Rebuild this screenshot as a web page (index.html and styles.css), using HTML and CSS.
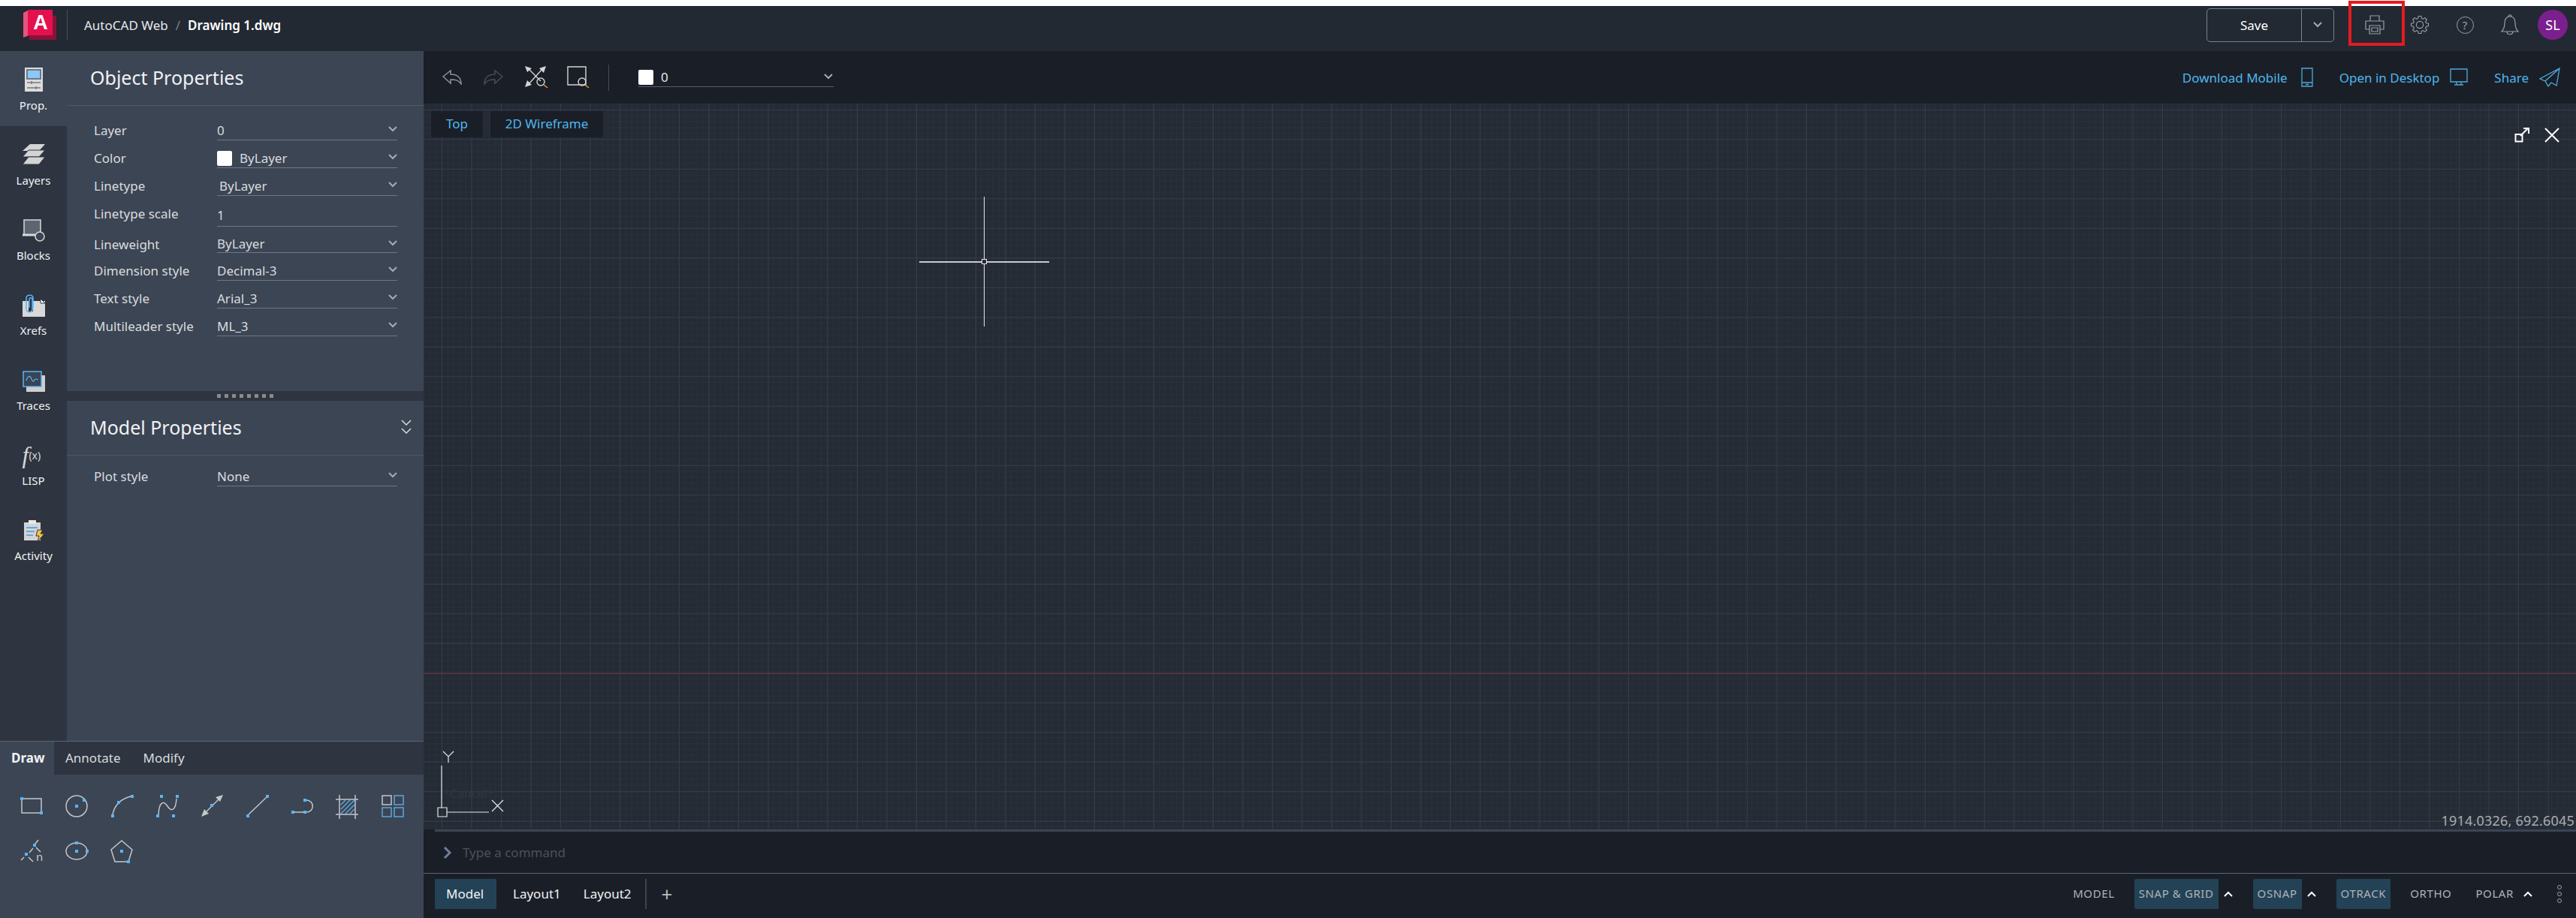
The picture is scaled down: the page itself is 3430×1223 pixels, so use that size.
FILE: index.html
```html
<!DOCTYPE html>
<html lang="en">
<head>
    <meta charset="UTF-8">
    <meta name="viewport" content="width=device-width, initial-scale=1.0">
    <title>AutoCAD Web - Drawing 1.dwg</title>
    <link rel="stylesheet" href="styles.css">
</head>
<body>
    <header class="topbar">
        <svg class="logo" viewBox="0 0 44 40">
            <path fill="#8a1238" d="M8 8h36v32H8z"/>
            <path fill="#e8537d" d="M0 4l8-4v34l-8 3z"/>
            <path fill="#e5114f" d="M6 0h33v34H6z"/>
            <text x="23" y="26" class="logo-a">A</text>
        </svg>
        <span class="top-sep"></span>
        <span class="crumb">AutoCAD Web</span>
        <span class="crumb-slash">/</span>
        <span class="crumb crumb-file">Drawing 1.dwg</span>
        <div class="top-right">
            <div class="save-btn">
                <span class="save-label">Save</span>
                <span class="save-drop">
                    <svg class="chev" viewBox="0 0 12 8"><path d="M1 1l5 5 5-5"/></svg>
                </span>
            </div>
            <span class="top-icon">
                <svg class="line-icon" width="26" height="26" viewBox="0 0 26 26">
                    <path d="M7 8V1h12v7M6 19H1V8h24v11h-5"/>
                    <path d="M6 14h14v11H6zM9 17h8v5H9z"/>
                </svg>
            </span>
            <span class="top-icon">
                <svg class="line-icon" width="26" height="26" viewBox="-14 -14 28 28">
                    <polygon points="9.18,-2.46 12.35,-1.96 12.35,1.96 9.18,2.46 8.23,4.75 10.11,7.35 7.35,10.11 4.75,8.23 2.46,9.18 1.96,12.35 -1.96,12.35 -2.46,9.18 -4.75,8.23 -7.35,10.11 -10.11,7.35 -8.23,4.75 -9.18,2.46 -12.35,1.96 -12.35,-1.96 -9.18,-2.46 -8.23,-4.75 -10.11,-7.35 -7.35,-10.11 -4.75,-8.23 -2.46,-9.18 -1.96,-12.35 1.96,-12.35 2.46,-9.18 4.75,-8.23 7.35,-10.11 10.11,-7.35 8.23,-4.75"/>
                    <circle r="5"/>
                </svg>
            </span>
            <span class="top-icon">
                <span class="help-icon">?</span>
            </span>
            <span class="top-icon">
                <svg class="line-icon" width="24" height="30" viewBox="0 0 24 30">
                    <path d="M12 4c-5 0-7 4-7 9 0 5-1 8-4 11h22c-3-3-4-6-4-11 0-5-2-9-7-9zM10 4c0-3 4-3 4 0M8 24c0 5 8 5 8 0"/>
                </svg>
            </span>
            <span class="avatar">SL</span>
        </div>
    </header>
    <div class="print-mark"></div>

    <div class="workspace">
        <aside class="sidebar">
            <div class="side-top">
                <nav class="rail">
                    <div class="rail-item active">
                        <svg width="24" height="32" viewBox="0 0 24 32">
                            <path fill="#dcdcdc" d="M0 0h24v32H0z"/>
                            <path fill="#8cc8f5" stroke="#6a7a8a" stroke-width="2" d="M3 3h18v12H3z"/>
                            <path stroke="#777" stroke-width="1.5" d="M3 20h18M3 27h18M9 18v4M15 25v4"/>
                        </svg>
                        <span>Prop.</span>
                    </div>
                    <div class="rail-item">
                        <svg width="30" height="30" viewBox="0 0 30 30" fill="#d4d4d4">
                            <path d="M10 0h20l-8 9H0z"/><path d="M8 8h22l-8 9H0z" stroke="#2e3440"/><path d="M8 17h22l-8 10H0z" stroke="#2e3440"/>
                        </svg>
                        <span>Layers</span>
                    </div>
                    <div class="rail-item">
                        <svg width="30" height="30" viewBox="0 0 30 30">
                            <path fill="#5c6570" stroke="#d8d8d8" stroke-width="1.5" d="M2 1h22v20H2z"/>
                            <path stroke="#d8d8d8" stroke-width="3" d="M0 21h17"/>
                            <circle cx="23" cy="23" r="6" fill="#3c4554" stroke="#d8d8d8" stroke-width="1.5"/>
                        </svg>
                        <span>Blocks</span>
                    </div>
                    <div class="rail-item">
                        <svg width="30" height="30" viewBox="0 0 30 30">
                            <path fill="#d8d8d8" d="M0 9h8v14h6V9h8l8 0 0 2v19H0z"/>
                            <path fill="#fff" stroke="#2e3440" d="M24 6l6 6h-6z"/>
                            <path fill="none" stroke="#5ab4f5" stroke-width="1.5" d="M14 20V5c0-5-9-5-9 0v14c0 6 8 6 8 1V7c0-3-4-3-4 0v11"/>
                        </svg>
                        <span>Xrefs</span>
                    </div>
                    <div class="rail-item">
                        <svg width="30" height="28" viewBox="0 0 30 28">
                            <path fill="#cfcfcf" d="M5 6h25v22H5z"/>
                            <path fill="#3a4452" stroke="#5ab4f5" stroke-width="1.5" d="M1 1h24v20H1z"/>
                            <path fill="none" stroke="#5ab4f5" stroke-width="1.2" d="M5 13c2-7 5-7 7-2s3 3 4 1 3-1 5 0"/>
                        </svg>
                        <span>Traces</span>
                    </div>
                    <div class="rail-item">
                        <div class="fx-icon"><i>f</i><small>(x)</small></div>
                        <span>LISP</span>
                    </div>
                    <div class="rail-item">
                        <svg width="30" height="30" viewBox="0 0 30 30">
                            <path fill="#d4d4d4" d="M2 4h22v24H2z"/>
                            <path fill="#e8e8e8" d="M8 1h10v5H8z"/>
                            <path stroke="#3d9be8" stroke-width="1.4" d="M5 11h15M5 16h11M5 21h9"/>
                            <path fill="#f5c242" stroke="#2e3440" d="M20 14h7l-3 5h5l-9 11 2-8h-4z"/>
                        </svg>
                        <span>Activity</span>
                    </div>
                </nav>
                <div class="panels">
                    <section class="panel-object">
                        <h2 class="panel-title">Object Properties</h2>
                        <div class="prop-list">
                            <div class="prop-row"><label>Layer</label><div class="prop-value">0<svg class="chev" viewBox="0 0 12 8"><path d="M1 1l5 5 5-5"/></svg></div></div>
                            <div class="prop-row"><label>Color</label><div class="prop-value"><span class="swatch"></span>ByLayer<svg class="chev" viewBox="0 0 12 8"><path d="M1 1l5 5 5-5"/></svg></div></div>
                            <div class="prop-row"><label>Linetype</label><div class="prop-value indent">ByLayer<svg class="chev" viewBox="0 0 12 8"><path d="M1 1l5 5 5-5"/></svg></div></div>
                            <div class="prop-row tall"><label>Linetype scale</label><div class="prop-value">1</div></div>
                            <div class="prop-row short"><label>Lineweight</label><div class="prop-value">ByLayer<svg class="chev" viewBox="0 0 12 8"><path d="M1 1l5 5 5-5"/></svg></div></div>
                            <div class="prop-row"><label>Dimension style</label><div class="prop-value">Decimal-3<svg class="chev" viewBox="0 0 12 8"><path d="M1 1l5 5 5-5"/></svg></div></div>
                            <div class="prop-row"><label>Text style</label><div class="prop-value">Arial_3<svg class="chev" viewBox="0 0 12 8"><path d="M1 1l5 5 5-5"/></svg></div></div>
                            <div class="prop-row"><label>Multileader style</label><div class="prop-value">ML_3<svg class="chev" viewBox="0 0 12 8"><path d="M1 1l5 5 5-5"/></svg></div></div>
                        </div>
                    </section>
                    <div class="splitter">
                        <i></i><i></i><i></i><i></i><i></i><i></i><i></i><i></i>
                    </div>
                    <section class="panel-model">
                        <h2 class="panel-title">Model Properties
                            <svg class="double-chev" viewBox="0 0 14 20"><path d="M1 1l6 6 6-6M1 12l6 6 6-6"/></svg>
                        </h2>
                        <div class="prop-list">
                            <div class="prop-row"><label>Plot style</label><div class="prop-value">None<svg class="chev" viewBox="0 0 12 8"><path d="M1 1l5 5 5-5"/></svg></div></div>
                        </div>
                    </section>
                </div>
            </div>
            <div class="palette">
                <div class="palette-tabs">
                    <span class="palette-tab active">Draw</span>
                    <span class="palette-tab">Annotate</span>
                    <span class="palette-tab">Modify</span>
                </div>
                <div class="tool-grid">
                    <svg class="tool" viewBox="0 0 32 32"><path d="M3 6h26v19H3z"/><rect class="h" x="1" y="4" width="4" height="4"/><rect class="h" x="27" y="23" width="4" height="4"/></svg>
                    <svg class="tool" viewBox="0 0 32 32"><circle cx="16" cy="16" r="14"/><rect class="h" x="14" y="14" width="4" height="4"/><rect class="h" x="24" y="6" width="4" height="4"/></svg>
                    <svg class="tool" viewBox="0 0 32 32"><path d="M4 27Q8 8 28 3"/><rect class="h" x="2" y="27" width="4" height="4"/><rect class="h" x="10" y="9" width="4" height="4"/><rect class="h" x="28" y="1" width="4" height="4"/></svg>
                    <svg class="tool" viewBox="0 0 32 32"><path d="M5 27C6 10 12 8 17 16S28 22 29 6"/><rect class="h" x="7" y="1" width="4" height="4"/><rect class="h" x="28" y="1" width="4" height="4"/><rect class="h" x="2" y="27" width="4" height="4"/><rect class="h" x="23" y="27" width="4" height="4"/></svg>
                    <svg class="tool" viewBox="0 0 32 32"><path d="M6 26L27 5"/><path class="fill" d="M2 30l4-10 6 6zM31 1l-10 3 6 6z"/><rect class="h" x="14" y="13" width="4" height="4"/></svg>
                    <svg class="tool" viewBox="0 0 32 32"><path d="M5 27L29 4"/><rect class="h" x="2" y="27" width="4" height="4"/><rect class="h" x="28" y="1" width="4" height="4"/></svg>
                    <svg class="tool" viewBox="0 0 32 32"><path d="M6 24h12M22 8c11 0 11 16 0 16"/><rect class="h" x="2" y="22" width="4" height="4"/><rect class="h" x="18" y="22" width="4" height="4"/><rect class="h" x="18" y="6" width="4" height="4"/></svg>
                    <svg class="tool" viewBox="0 0 32 32"><path class="blue" d="M8 14l6-6M8 20l12-12M8 26l18-18M14 26l12-12M20 26l6-6"/><path d="M1 7h30M1 27h30M6 1v32M27 1v32"/></svg>
                    <svg class="tool" viewBox="0 0 32 32"><path d="M3 2h12v12H3z"/><path class="blue" d="M19 2h12v12H19zM3 18h12v12H3zM19 18h12v12H19z"/></svg>
                    <svg class="tool" viewBox="0 0 32 32"><path d="M21 6l4-5M18 12l-5 6M22 11l6 6M6 24l-4 4M12 24l6 6"/><rect class="h" x="18" y="6" width="4" height="4"/><rect class="h" x="7" y="18" width="4" height="4"/><text x="22" y="29" class="tool-n">n</text></svg>
                    <svg class="tool" viewBox="0 0 32 32"><ellipse cx="16" cy="16" rx="14" ry="11"/><rect class="h" x="14" y="14" width="4" height="4"/><rect class="h" x="14" y="3" width="4" height="4"/><rect class="h" x="28" y="14" width="4" height="4"/></svg>
                    <svg class="tool" viewBox="0 0 32 32"><path d="M16 2l14 12-5 16H7L2 14z"/><rect class="h" x="14" y="14" width="4" height="4"/><rect class="h" x="23" y="28" width="4" height="4"/></svg>
                </div>
            </div>
        </aside>

        <main class="main">
            <div class="toolbar">
                <svg class="tb-icon" width="26" height="20" viewBox="0 0 26 20"><path d="M1 9l10-8v5c8 0 14 4 14 13-3-5-7-6-14-6v5z"/></svg>
                <svg class="tb-icon dim" width="26" height="20" viewBox="0 0 26 20"><path d="M25 9L15 1v5C7 6 1 10 1 19c3-5 7-6 14-6v5z"/></svg>
                <svg class="tb-zoom" width="32" height="30" viewBox="0 0 32 30">
                    <path class="z-line" d="M4 3l17 17M24 3L4 25"/>
                    <path class="z-fill" d="M0 0l9 3-6 5zM28 0l-3 9-6-6zM0 28l3-9 6 6z"/>
                    <circle class="z-line" cx="21" cy="21" r="5" fill="#1a1f27"/>
                    <path class="z-mag" d="M25 25l5 4"/>
                </svg>
                <svg class="tb-zoom" width="30" height="30" viewBox="0 0 30 30">
                    <path class="z-line" d="M1 1h24v24H1z"/>
                    <circle class="z-line" cx="20" cy="21" r="5" fill="#1a1f27"/>
                    <path class="z-mag" d="M24 25l5 4"/>
                </svg>
                <span class="tb-sep"></span>
                <div class="layer-select">
                    <span class="swatch"></span>0
                    <svg class="chev" viewBox="0 0 12 8"><path d="M1 1l5 5 5-5"/></svg>
                </div>
                <div class="tb-links">
                    <span class="tb-link mobile">Download Mobile
                        <svg width="16" height="26" viewBox="0 0 16 26"><path d="M1 1h14v24H1zM1 20h14M6 22.500h4"/></svg>
                    </span>
                    <span class="tb-link">Open in Desktop
                        <svg width="24" height="24" viewBox="0 0 24 24"><path d="M1 1h22v17H1zM9 18v4M15 18v4M6 22h12"/></svg>
                    </span>
                    <span class="tb-link">Share
                        <svg width="28" height="26" viewBox="0 0 28 26"><path d="M27 1L1 15l7 3zM27 1L8 18l4 7 4-5 7 4zM8 18l4 7"/></svg>
                    </span>
                </div>
            </div>

            <div class="canvas">
                <div class="view-tabs">
                    <span class="view-tab">Top</span>
                    <span class="view-tab wide">2D Wireframe</span>
                </div>
                <div class="canvas-actions">
                    <svg width="20" height="20" viewBox="0 0 20 20"><path d="M1.500 9h9v9.500h-9zM8 11l10-10M12 1h7v7"/></svg>
                    <svg width="20" height="20" viewBox="0 0 20 20"><path d="M1 1l18 18M19 1L1 19"/></svg>
                </div>
                <div class="red-axis"></div>
                <div class="crosshair">
                    <span class="cross-h"></span>
                    <span class="cross-v"></span>
                    <span class="cross-box"></span>
                </div>
                <svg class="ucs" width="100" height="90" viewBox="0 0 100 90">
                    <path d="M14 20v56M21 82h56M9 76h12v12H9z"/>
                    <path d="M16 1l7 7 7-7M23 8v8M81 66l15 15M96 66L81 81"/>
                </svg>
                <span class="cancel-text">*Cancel*</span>
                <span class="coords">1914.0326, 692.6045</span>
            </div>

            <div class="command-strip"></div>
            <div class="command-line">
                <svg width="12" height="16" viewBox="0 0 12 16"><path d="M2 1l7 7-7 7"/></svg>
                <span>Type a command</span>
            </div>

            <footer class="statusbar">
                <span class="layout-tab active">Model</span>
                <span class="layout-tab">Layout1</span>
                <span class="layout-tab">Layout2</span>
                <span class="layout-sep"></span>
                <span class="layout-add">+</span>
                <div class="status-right">
                    <span class="status-item">MODEL</span>
                    <span class="status-item on">SNAP &amp; GRID</span>
                    <svg class="caret" viewBox="0 0 12 8"><path d="M1 7l5-5 5 5"/></svg>
                    <span class="status-item on">OSNAP</span>
                    <svg class="caret" viewBox="0 0 12 8"><path d="M1 7l5-5 5 5"/></svg>
                    <span class="status-item on">OTRACK</span>
                    <span class="status-item">ORTHO</span>
                    <span class="status-item">POLAR</span>
                    <svg class="caret" viewBox="0 0 12 8"><path d="M1 7l5-5 5 5"/></svg>
                    <span class="status-more"><i></i><i></i><i></i></span>
                </div>
            </footer>
        </main>
    </div>
</body>
</html>
```

FILE: styles.css
```css
* {
    box-sizing: border-box;
}
html, body {
    margin: 0;
    height: 100%;
}
body {
    display: flex;
    flex-direction: column;
    padding-top: 8px;
    background-color: #FFF;
    color: #E6E8EA;
    font-family: "Noto Sans", Arial, sans-serif;
    font-size: 17px;
    overflow: hidden;
    position: relative;
}

/* top bar */
.topbar {
    height: 60px;
    flex: none;
    display: flex;
    align-items: center;
    padding-bottom: 10px;
    background-color: #222933;
}
.logo {
    width: 44px;
    height: 40px;
    margin-left: 31px;
}
.logo-a {
    fill: #FFF;
    font-family: "Liberation Sans", sans-serif;
    font-weight: 700;
    font-size: 27px;
    text-anchor: middle;
}
.top-sep {
    width: 1px;
    height: 40px;
    margin: 0 22px 0 14px;
    background-color: #48505C;
}
.crumb {
    font-size: 17px;
    color: #E6E8EA;
}
.crumb-file {
    font-weight: 600;
    color: #FFF;
}
.crumb-slash {
    margin: 0 10px;
    color: #79808A;
}
.top-right {
    margin-left: auto;
    display: flex;
    align-items: center;
    padding-right: 11px;
}
.save-btn {
    width: 170px;
    height: 45px;
    display: flex;
    border: 1px solid #79828E;
    border-radius: 5px;
    margin-right: 24px;
}
.save-label {
    width: 126px;
    border-right: 1px solid #79828E;
    text-align: center;
    line-height: 43px;
    font-size: 17px;
    color: #FFF;
}
.save-drop {
    flex: 1;
    display: flex;
    align-items: center;
    justify-content: center;
}
.chev {
    width: 12px;
    height: 8px;
    fill: none;
    stroke: #A6ABB2;
    stroke-width: 2;
}
.top-icon {
    width: 60px;
    display: flex;
    justify-content: center;
    align-items: center;
}
.line-icon {
    fill: none;
    stroke: #9AA0A8;
    stroke-width: 1.2;
}
.help-icon {
    width: 23px;
    height: 23px;
    border: 1.5px solid #9AA0A8;
    border-radius: 50%;
    color: #9AA0A8;
    font-size: 15px;
    line-height: 20px;
    text-align: center;
}
.avatar {
    width: 40px;
    height: 40px;
    margin-left: 7px;
    border-radius: 50%;
    background-color: #7B1F8F;
    color: #FFF;
    font-size: 18px;
    line-height: 40px;
    text-align: center;
}
.print-mark {
    position: absolute;
    left: 3127px;
    top: 1px;
    width: 75px;
    height: 60px;
    border: 4px solid #E31B1F;
}

/* layout */
.workspace {
    flex: 1;
    display: flex;
    min-height: 0;
}
.sidebar {
    width: 564px;
    flex: none;
    display: flex;
    flex-direction: column;
    background-color: #3C4554;
}
.side-top {
    flex: 1;
    display: flex;
    min-height: 0;
}

/* rail */
.rail {
    width: 89px;
    flex: none;
    background-color: #2E3440;
}
.rail-item {
    height: 100px;
    display: flex;
    flex-direction: column;
    align-items: center;
    justify-content: flex-end;
    padding-bottom: 18px;
    font-size: 15px;
    color: #F0F2F4;
    gap: 8px;
}
.rail-item.active {
    background-color: #3C4554;
}
.fx-icon {
    height: 32px;
    width: 30px;
    display: flex;
    align-items: center;
    color: #D8D8D8;
}
.fx-icon i {
    font-family: "Liberation Serif", serif;
    font-size: 32px;
}
.fx-icon small {
    font-size: 14px;
}

/* property panels */
.panels {
    flex: 1;
    display: flex;
    flex-direction: column;
}
.panel-object {
    height: 453px;
}
.panel-title {
    position: relative;
    height: 73px;
    margin: 0;
    padding-left: 31px;
    border-bottom: 1px solid #4D5766;
    font-size: 25px;
    font-weight: 400;
    line-height: 70px;
    color: #F0F2F4;
}
.prop-list {
    padding: 9px 0 0 36px;
}
.prop-row {
    display: flex;
    height: 37px;
    align-items: stretch;
}
.prop-row.tall {
    height: 41px;
}
.prop-row.short {
    height: 35px;
}
.prop-row label {
    width: 164px;
    flex: none;
    padding-top: 12px;
    line-height: 24px;
    color: #D9DCDF;
}
.prop-value {
    width: 240px;
    display: flex;
    align-items: center;
    position: relative;
    border-bottom: 1px solid #6D7785;
    color: #D9DCDF;
    padding-top: 12px;
    line-height: 24px;
}
.prop-value.indent {
    padding-left: 3px;
}
.prop-value .chev {
    position: absolute;
    right: 0;
    top: 18px;
}
.swatch {
    width: 20px;
    height: 20px;
    flex: none;
    margin-right: 10px;
    border-radius: 2px;
    background-color: #FFF;
}
.splitter {
    height: 13px;
    flex: none;
    display: flex;
    gap: 5px;
    align-items: center;
    padding-left: 200px;
    background-color: #2E3440;
}
.splitter i {
    width: 5px;
    height: 5px;
    background-color: #8A8A8A;
}
.panel-model .prop-list {
    padding-top: 4px;
}
.double-chev {
    position: absolute;
    right: 16px;
    top: 25px;
    width: 14px;
    height: 20px;
    fill: none;
    stroke: #D9DCDF;
    stroke-width: 1.5;
}

/* draw palette */
.palette {
    height: 236px;
    flex: none;
    border-top: 1px solid #5B6572;
}
.palette-tabs {
    height: 44px;
    display: flex;
    background-color: #2E3440;
}
.palette-tab {
    padding: 0 15px;
    line-height: 44px;
    font-size: 17px;
    color: #D9DCDF;
}
.palette-tab.active {
    width: 72px;
    background-color: #3C4554;
    font-weight: 700;
    color: #F0F2F4;
}
.tool-grid {
    display: grid;
    grid-template-columns: repeat(9, 32px);
    column-gap: 28px;
    row-gap: 28px;
    padding: 26px 0 0 26px;
}
.tool {
    width: 32px;
    height: 32px;
    fill: none;
    stroke: #C4C6C9;
    stroke-width: 1.5;
    overflow: visible;
}
.tool .h {
    fill: #5AB4F5;
    stroke: none;
}
.tool .fill {
    fill: #C4C6C9;
    stroke: none;
}
.tool .blue {
    stroke: #5AA6DC;
}
.tool-n {
    fill: #C4C6C9;
    stroke: none;
    font-size: 15px;
}

/* main column */
.main {
    flex: 1;
    min-width: 0;
    display: flex;
    flex-direction: column;
    background-color: #1A1F27;
}
.toolbar {
    height: 70px;
    flex: none;
    display: flex;
    align-items: center;
    padding-left: 25px;
    background-color: #1A1F27;
}
.tb-icon {
    fill: none;
    stroke: #8D9299;
    stroke-width: 1.5;
    margin-right: 29px;
}
.tb-icon.dim {
    stroke: #484D55;
}
.tb-zoom {
    margin-right: 24px;
}
.z-line {
    fill: none;
    stroke: #D4D4D4;
    stroke-width: 1.4;
}
.z-fill {
    fill: #D4D4D4;
}
.z-mag {
    stroke: #E0A040;
    stroke-width: 1.5;
}
.tb-sep {
    width: 1px;
    height: 35px;
    margin: 0 39px 0 1px;
    background-color: #464C55;
}
.layer-select {
    width: 260px;
    height: 24px;
    margin-top: 1px;
    display: flex;
    align-items: center;
    position: relative;
    border-bottom: 1px solid #5A606A;
    color: #E6E8EA;
    line-height: 20px;
}
.layer-select .chev {
    position: absolute;
    right: 1px;
    top: 6px;
}
.tb-links {
    margin-left: auto;
    display: flex;
    align-items: center;
    padding-right: 21px;
    gap: 35px;
}
.tb-link {
    display: flex;
    align-items: center;
    gap: 14px;
    color: #4FB6EE;
}
.tb-link.mobile {
    gap: 18px;
}
.tb-link svg {
    fill: none;
    stroke: #4FA9DC;
    stroke-width: 1.3;
}

/* drawing canvas */
.canvas {
    position: relative;
    flex: 1;
    min-height: 0;
    overflow: hidden;
    background-color: #252B35;
    background-image:
        linear-gradient(to right, #353B4B 1px, transparent 1px),
        linear-gradient(to bottom, #353B4B 1px, transparent 1px),
        linear-gradient(to right, #2A303A 1px, transparent 1px),
        linear-gradient(to bottom, #2A303A 1px, transparent 1px);
    background-size: 39.5px 39.5px, 39.5px 39.5px, 7.9px 7.9px, 7.9px 7.9px;
    background-position: 24px 0, 0 7.8px, 24px 0, 0 7.8px;
}
.view-tabs {
    position: absolute;
    left: 10px;
    top: 10px;
    display: flex;
    gap: 10px;
}
.view-tab {
    width: 69px;
    height: 35px;
    border-radius: 2px;
    background-color: #1A1F27;
    color: #4FB6EE;
    font-size: 17px;
    line-height: 34px;
    text-align: center;
}
.view-tab.wide {
    width: 150px;
}
.canvas-actions {
    position: absolute;
    right: 22px;
    top: 32px;
    display: flex;
    gap: 20px;
}
.canvas-actions svg {
    fill: none;
    stroke: #FFF;
    stroke-width: 2;
}
.red-axis {
    position: absolute;
    left: 0;
    right: 0;
    top: 759px;
    height: 1px;
    background-color: #6A3038;
}
.crosshair {
    position: absolute;
    left: 660px;
    top: 124px;
    width: 173px;
    height: 173px;
}
.cross-h {
    position: absolute;
    left: 0;
    right: 0;
    top: 86px;
    height: 2px;
    background-color: #C8CACD;
}
.cross-v {
    position: absolute;
    top: 0;
    bottom: 0;
    left: 86px;
    width: 1px;
    background-color: #E8E8E8;
}
.cross-box {
    position: absolute;
    left: 83px;
    top: 83px;
    width: 7px;
    height: 7px;
    border: 1px solid #E8E8E8;
    background-color: #252B35;
}
.ucs {
    position: absolute;
    left: 10px;
    top: 862px;
    overflow: visible;
    fill: none;
    stroke: #E8E8E8;
    stroke-width: 1.2;
}
.cancel-text {
    position: absolute;
    left: 26px;
    top: 908px;
    color: #30363F;
    font-size: 16px;
}
.coords {
    position: absolute;
    right: 2px;
    top: 943px;
    color: #A9ADB2;
    font-size: 18px;
    letter-spacing: 0.2px;
}

/* command line */
.command-strip {
    height: 3px;
    flex: none;
    margin-left: 15px;
    background-color: #3C4554;
}
.command-line {
    height: 56px;
    flex: none;
    display: flex;
    align-items: center;
    gap: 14px;
    padding-left: 26px;
    border-bottom: 1px solid #5B6572;
    color: #4C5158;
    font-size: 17px;
}
.command-line svg {
    fill: none;
    stroke: #6B7F9C;
    stroke-width: 3;
}

/* status bar */
.statusbar {
    height: 59px;
    flex: none;
    display: flex;
    align-items: center;
    padding: 0 0 6px 15px;
}
.layout-tab {
    height: 40px;
    padding: 0 15px;
    line-height: 39px;
    font-size: 17px;
    color: #F0F2F4;
}
.layout-tab.active {
    width: 82px;
    margin-right: 7px;
    background-color: #234256;
}
.layout-sep {
    width: 2px;
    height: 40px;
    margin-left: 3px;
    background-color: #3C4554;
}
.layout-add {
    margin-left: 20px;
    font-size: 26px;
    line-height: 38px;
    color: #B9BCC0;
}
.status-right {
    margin-left: auto;
    display: flex;
    align-items: center;
    padding-right: 19px;
}
.status-item {
    height: 40px;
    padding: 0 6px;
    border-radius: 3px;
    margin-left: 20px;
    font-size: 15px;
    letter-spacing: 0.6px;
    line-height: 39px;
    color: #AEB3B8;
}
.status-item.on {
    background-color: #234256;
    border-radius: 3px 0 0 3px;
}
.caret {
    width: 12px;
    height: 8px;
    margin-left: 7px;
    margin-right: 7px;
    fill: none;
    stroke: #FFF;
    stroke-width: 2;
}
.status-more {
    display: flex;
    flex-direction: column;
    gap: 3px;
    margin-left: 26px;
}
.status-more i {
    width: 6px;
    height: 6px;
    border: 1px solid #9BA0A6;
    border-radius: 50%;
}
```
